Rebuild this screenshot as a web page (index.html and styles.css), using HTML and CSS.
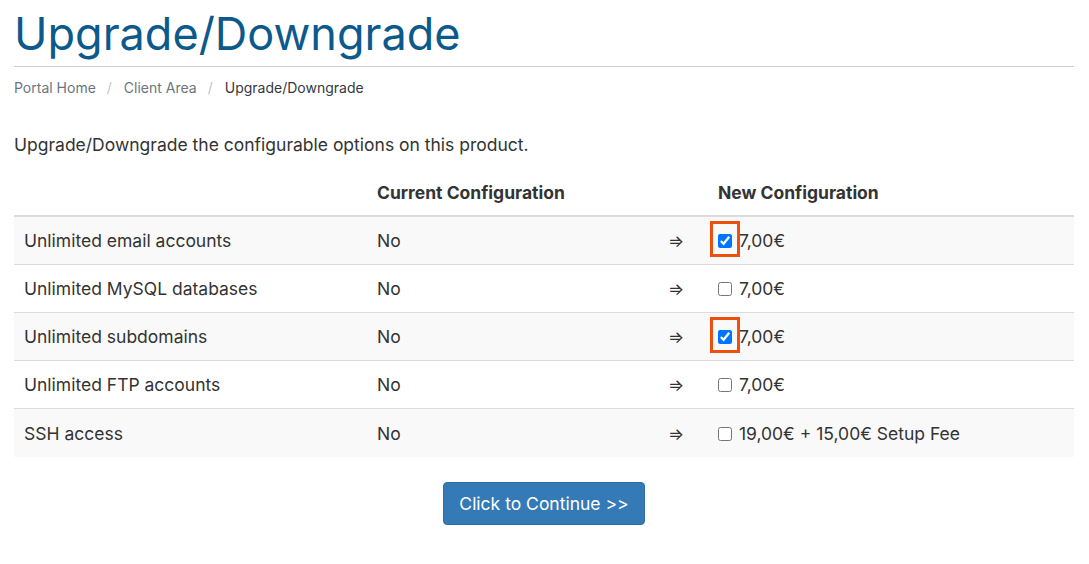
FILE: index.html
```html
<!DOCTYPE html>
<html lang="en">
<head>
<meta charset="utf-8">
<title>Upgrade/Downgrade</title>
<link rel="stylesheet" href="styles.css">
</head>
<body>
<div class="page">
  <header class="page-header">
    <h1 class="title">Upgrade/Downgrade</h1>
  </header>
  <nav class="breadcrumb">
    <a href="#" class="crumb">Portal Home</a><span class="sep">/</span><a href="#" class="crumb">Client Area</a><span class="sep">/</span><span class="crumb active">Upgrade/Downgrade</span>
  </nav>
  <p class="intro">Upgrade/Downgrade the configurable options on this product.</p>
  <table class="config-table">
    <colgroup>
      <col class="c-name"><col class="c-current"><col class="c-arrow"><col class="c-new">
    </colgroup>
    <thead>
      <tr><th></th><th>Current Configuration</th><th></th><th>New Configuration</th></tr>
    </thead>
    <tbody>
      <tr class="odd"><td>Unlimited email accounts</td><td>No</td><td class="arrow">⇒</td><td><span class="mark"><input type="checkbox" checked></span>7,00€</td></tr>
      <tr><td>Unlimited MySQL databases</td><td>No</td><td class="arrow">⇒</td><td><input type="checkbox"> 7,00€</td></tr>
      <tr class="odd"><td>Unlimited subdomains</td><td>No</td><td class="arrow">⇒</td><td><span class="mark"><input type="checkbox" checked></span>7,00€</td></tr>
      <tr><td>Unlimited FTP accounts</td><td>No</td><td class="arrow">⇒</td><td><input type="checkbox"> 7,00€</td></tr>
      <tr class="odd"><td>SSH access</td><td>No</td><td class="arrow">⇒</td><td><input type="checkbox"> 19,00€ + 15,00€ Setup Fee</td></tr>
    </tbody>
  </table>
  <div class="actions">
    <button class="btn-continue" type="button">Click to Continue &gt;&gt;</button>
  </div>
</div>
</body>
</html>
```
FILE: styles.css
```css
* { box-sizing: border-box; }
html, body { margin: 0; padding: 0; background: #fff; }
body {
  font-family: Inter, "Noto Sans", "Liberation Sans", sans-serif;
  font-size: 17.5px;
  color: #333;
}
.page { padding: 0 15px 0 14px; }
.page-header { border-bottom: 1px solid #ccc; }
.title {
  margin: 10px 0 8px;
  font-size: 45px;
  line-height: 48px;
  font-weight: 400;
  color: #0c5a8c;
}
.breadcrumb {
  margin-top: 11px;
  font-size: 14px;
  line-height: 20px;
  display: flex;
  align-items: center;
}
.crumb { color: #6c757d; text-decoration: none; }
.crumb.active { color: #343a40; }
.sep { color: #c4c4c4; padding: 0 12px 0 11px; }
.intro {
  margin: 35px 0 0;
  line-height: 24px;
}
.config-table {
  margin-top: 14px;
  width: 100%;
  border-collapse: collapse;
  table-layout: fixed;
}
.c-name { width: 353px; }
.c-current { width: 291px; }
.c-arrow { width: 50px; }
.config-table th {
  text-align: left;
  font-weight: 700;
  padding: 10px 10px;
  line-height: 24px;
  border-bottom: 2px solid #dcdcdc;
}
.config-table td {
  padding: 12px 10px 11px;
  line-height: 24px;
  height: 48px;
  border-top: 1px solid #dcdcdc;
  vertical-align: middle;
}
.config-table td.arrow { font-size: 17px; }
.config-table tbody tr:first-child td { border-top: none; }
.config-table tr.odd td { background: #f9f9f9; }
.config-table input[type="checkbox"] {
  margin: 0 2px 0 0;
  width: 14px;
  height: 14px;
  vertical-align: -1px;
}
.mark {
  display: inline-block;
  width: 30px;
  height: 36px;
  border: 3px solid #ee4f0c;
  padding: 10px 0 0 5px;
  margin: -10px -1px -4px -8px;
  vertical-align: middle;
}
.mark input[type="checkbox"] {
  display: block;
  margin: 0;
}
.actions {
  display: flex;
  justify-content: center;
  margin-top: 25px;
}
.btn-continue {
  font-family: Inter, "Noto Sans", "Liberation Sans", sans-serif;
  font-size: 17.5px;
  color: #fff;
  background: #337ab7;
  border: 1px solid #2e6da4;
  border-radius: 4px;
  width: 202px;
  height: 43px;
  padding: 0;
  cursor: pointer;
}
```
